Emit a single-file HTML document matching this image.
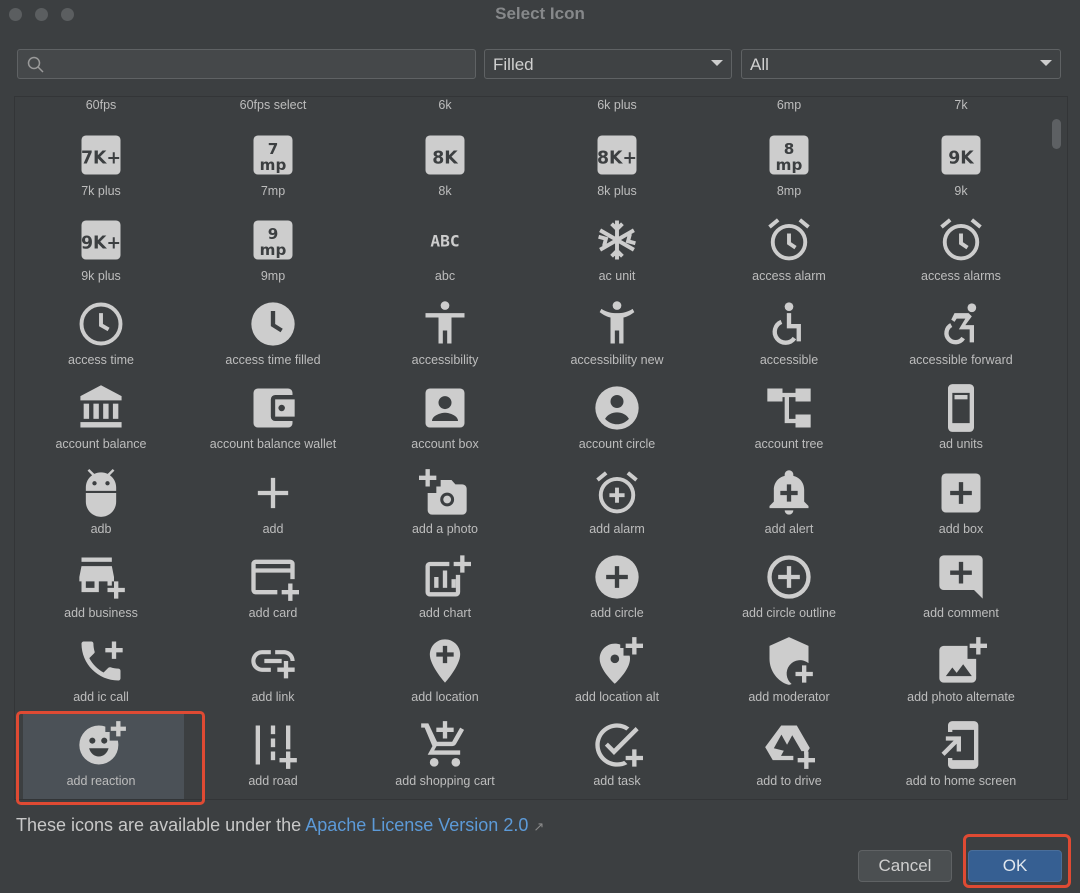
<!DOCTYPE html>
<html><head><meta charset="utf-8"><style>
body{margin:0;width:1080px;height:893px;background:#3c3f41;font-family:"Liberation Sans",sans-serif;position:relative;overflow:hidden}
.a{position:absolute}
.dot{position:absolute;top:8px;width:13px;height:13px;border-radius:50%;background:#5b5e60}
.grid{position:absolute;left:14px;top:96px;width:1054px;height:704px;border:1px solid #333537;box-sizing:border-box;background:#3c3f41;overflow:hidden}
.c{position:absolute;width:172px;height:84px;text-align:center}
.c svg{position:absolute;left:60px;top:0;width:52px;height:52px}
.c span{position:absolute;left:0;right:0;top:55px;font-size:12.5px;color:#bdbdbd;white-space:nowrap}
svg{fill:#cdcdcd}
.bt{font-size:18px;font-weight:bold;fill:#3c3f41;font-family:"DejaVu Sans",sans-serif}
</style></head><body>
<div class="dot" style="left:9px"></div><div class="dot" style="left:35px"></div><div class="dot" style="left:61px"></div>
<div class="a" style="left:0;right:0;top:4px;text-align:center;color:#86888a;font-size:17px;font-weight:bold">Select Icon</div>
<div class="a" style="left:17px;top:49px;width:459px;height:30px;box-sizing:border-box;border:1px solid #5f6264;border-radius:3px;background:#45484a"></div>
<svg class="a" style="left:27px;top:56px;width:18px;height:18px;fill:none;stroke:#9a9a9a;stroke-width:1.5"><circle cx="7" cy="7" r="5.5"/><line x1="11" y1="11" x2="16" y2="16"/></svg>
<div class="a" style="left:484px;top:49px;width:248px;height:30px;box-sizing:border-box;border:1px solid #5f6264;border-radius:3px;background:#3f4244;color:#d0d0d0;font-size:17px;line-height:30px;padding-left:8px">Filled</div>
<svg class="a" style="left:711px;top:60px;width:12px;height:8px"><path d="M0 0h12L6 6z"/></svg>
<div class="a" style="left:741px;top:49px;width:320px;height:30px;box-sizing:border-box;border:1px solid #5f6264;border-radius:3px;background:#3f4244;color:#d0d0d0;font-size:17px;line-height:30px;padding-left:8px">All</div>
<svg class="a" style="left:1040px;top:60px;width:12px;height:8px"><path d="M0 0h12L6 6z"/></svg>

<div class="grid">
<div class="a" style="left:8px;top:616px;width:161px;height:88px;background:#4b5157"></div>
<div class="a" style="left:1037px;top:22px;width:9px;height:30px;border-radius:5px;background:#5d6063"></div>
<div class="c" style="left:0;top:-54px"><span>60fps</span></div>
<div class="c" style="left:172px;top:-54px"><span>60fps select</span></div>
<div class="c" style="left:344px;top:-54px"><span>6k</span></div>
<div class="c" style="left:516px;top:-54px"><span>6k plus</span></div>
<div class="c" style="left:688px;top:-54px"><span>6mp</span></div>
<div class="c" style="left:860px;top:-54px"><span>7k</span></div>
<!-- row1 -->
<div class="c" style="left:0;top:32px"><svg viewBox="0 0 24 24"><rect x="3" y="3" width="18" height="18" rx="2"/><text x="12" y="16" text-anchor="middle" class="bt" style="font-size:8px">7K+</text></svg><span>7k plus</span></div>
<div class="c" style="left:172px;top:32px"><svg viewBox="0 0 24 24"><rect x="3" y="3" width="18" height="18" rx="2"/><text x="12" y="11.5" text-anchor="middle" class="bt" style="font-size:7px">7</text><text x="12" y="19" text-anchor="middle" class="bt" style="font-size:7px">mp</text></svg><span>7mp</span></div>
<div class="c" style="left:344px;top:32px"><svg viewBox="0 0 24 24"><rect x="3" y="3" width="18" height="18" rx="2"/><text x="12" y="16" text-anchor="middle" class="bt" style="font-size:8px">8K</text></svg><span>8k</span></div>
<div class="c" style="left:516px;top:32px"><svg viewBox="0 0 24 24"><rect x="3" y="3" width="18" height="18" rx="2"/><text x="12" y="16" text-anchor="middle" class="bt" style="font-size:8px">8K+</text></svg><span>8k plus</span></div>
<div class="c" style="left:688px;top:32px"><svg viewBox="0 0 24 24"><rect x="3" y="3" width="18" height="18" rx="2"/><text x="12" y="11.5" text-anchor="middle" class="bt" style="font-size:7px">8</text><text x="12" y="19" text-anchor="middle" class="bt" style="font-size:7px">mp</text></svg><span>8mp</span></div>
<div class="c" style="left:860px;top:32px"><svg viewBox="0 0 24 24"><rect x="3" y="3" width="18" height="18" rx="2"/><text x="12" y="16" text-anchor="middle" class="bt" style="font-size:8px">9K</text></svg><span>9k</span></div>
<!-- row2 -->
<div class="c" style="left:0;top:117px"><svg viewBox="0 0 24 24"><rect x="3" y="3" width="18" height="18" rx="2"/><text x="12" y="16" text-anchor="middle" class="bt" style="font-size:8px">9K+</text></svg><span>9k plus</span></div>
<div class="c" style="left:172px;top:117px"><svg viewBox="0 0 24 24"><rect x="3" y="3" width="18" height="18" rx="2"/><text x="12" y="11.5" text-anchor="middle" class="bt" style="font-size:7px">9</text><text x="12" y="19" text-anchor="middle" class="bt" style="font-size:7px">mp</text></svg><span>9mp</span></div>
<div class="c" style="left:344px;top:117px"><svg viewBox="0 0 24 24"><text x="12" y="15" text-anchor="middle" style="font-size:7.5px;font-weight:bold;font-family:'DejaVu Sans Mono',monospace">ABC</text></svg><span>abc</span></div>
<div class="c" style="left:516px;top:117px"><svg viewBox="0 0 24 24" style="fill:none;stroke:#cdcdcd;stroke-width:1.8"><path d="M12 3v18M4.2 7.5l15.6 9M4.2 16.5l15.6-9M9.5 4.5L12 7l2.5-2.5M9.5 19.5L12 17l2.5 2.5M3.5 10.5l3.4.9-.9 3.4M20.5 13.5l-3.4-.9.9-3.4"/></svg><span>ac unit</span></div>
<div class="c" style="left:688px;top:117px"><svg viewBox="0 0 24 24" style="fill:none;stroke:#cdcdcd;stroke-width:1.8"><circle cx="12" cy="13" r="7.5"/><path d="M12 9v4.5l3 2M3 6l4-3.3M21 6l-4-3.3"/></svg><span>access alarm</span></div>
<div class="c" style="left:860px;top:117px"><svg viewBox="0 0 24 24" style="fill:none;stroke:#cdcdcd;stroke-width:1.8"><circle cx="12" cy="13" r="7.5"/><path d="M12 9v4.5l3 2M3 6l4-3.3M21 6l-4-3.3"/></svg><span>access alarms</span></div>
<!-- row3 -->
<div class="c" style="left:0;top:201px"><svg viewBox="0 0 24 24" style="fill:none;stroke:#cdcdcd;stroke-width:1.8"><circle cx="12" cy="12" r="9"/><path d="M12 7v5.5l3.5 2"/></svg><span>access time</span></div>
<div class="c" style="left:172px;top:201px"><svg viewBox="0 0 24 24"><circle cx="12" cy="12" r="10"/><path d="M11 6h2v6l3.5 2.2-1 1.6L11 13z" fill="#3c3f41"/></svg><span>access time filled</span></div>
<div class="c" style="left:344px;top:201px"><svg viewBox="0 0 24 24"><circle cx="12" cy="3.5" r="2"/><path d="M3 7h18v2h-6v12h-2v-6h-2v6H9V9H3z"/></svg><span>accessibility</span></div>
<div class="c" style="left:516px;top:201px"><svg viewBox="0 0 24 24"><circle cx="12" cy="3.5" r="2"/><path d="M4 6.5l.8-1.5C7 6.5 9.5 7 12 7s5-.5 7.2-2l.8 1.5C18 8 16.5 8.7 15 9v12h-2v-6h-2v6H9V9C7.5 8.7 6 8 4 6.5z"/></svg><span>accessibility new</span></div>
<div class="c" style="left:688px;top:201px"><svg viewBox="0 0 24 24"><circle cx="12" cy="4" r="2"/><path d="M11 7h2v5h4.5v8h-2v-6H11z"/><path d="M8.5 11a5 5 0 1 0 6 7.5" fill="none" stroke="#cdcdcd" stroke-width="2"/></svg><span>accessible</span></div>
<div class="c" style="left:860px;top:201px"><svg viewBox="0 0 24 24"><circle cx="17" cy="4.5" r="2"/><path d="M9 7h6.5l1.5 1.5-3 4h4v8h-2v-6h-5l3-5h-4l-1 1.5-1.5-1z"/><path d="M7.5 12.5a4.2 4.2 0 1 0 5.5 6" fill="none" stroke="#cdcdcd" stroke-width="2"/></svg><span>accessible forward</span></div>
<!-- row4 -->
<div class="c" style="left:0;top:285px"><svg viewBox="0 0 24 24"><path d="M12 1.5L2.5 6.5V8.5h19V6.5z"/><rect x="4" y="10" width="2.5" height="7"/><rect x="8.5" y="10" width="2.5" height="7"/><rect x="13" y="10" width="2.5" height="7"/><rect x="17.5" y="10" width="2.5" height="7"/><rect x="2.5" y="18.5" width="19" height="2.5"/></svg><span>account balance</span></div>
<div class="c" style="left:172px;top:285px"><svg viewBox="0 0 24 24"><path d="M5 3h14a2 2 0 0 1 2 2v1h-8a2 2 0 0 0-2 2v8a2 2 0 0 0 2 2h8v1a2 2 0 0 1-2 2H5a2 2 0 0 1-2-2V5a2 2 0 0 1 2-2z"/><path d="M13 8h9v8h-9z"/><circle cx="16" cy="12" r="1.5" fill="#3c3f41"/></svg><span>account balance wallet</span></div>
<div class="c" style="left:344px;top:285px"><svg viewBox="0 0 24 24"><rect x="3" y="3" width="18" height="18" rx="2"/><circle cx="12" cy="9.5" r="3" fill="#3c3f41"/><path d="M6 18c0-2.5 4-3.8 6-3.8s6 1.3 6 3.8z" fill="#3c3f41"/></svg><span>account box</span></div>
<div class="c" style="left:516px;top:285px"><svg viewBox="0 0 24 24"><circle cx="12" cy="12" r="10"/><circle cx="12" cy="9" r="3" fill="#3c3f41"/><path d="M6.5 17c1-2 3.5-3 5.5-3s4.5 1 5.5 3c-1.5 1.6-3.4 2.5-5.5 2.5S8 18.6 6.5 17z" fill="#3c3f41"/></svg><span>account circle</span></div>
<div class="c" style="left:688px;top:285px"><svg viewBox="0 0 24 24"><rect x="2" y="3" width="7" height="6"/><rect x="15" y="3" width="7" height="6"/><rect x="15" y="15" width="7" height="6"/><path d="M9 5h6v2h-3v10h3v2h-5V7H9z"/></svg><span>account tree</span></div>
<div class="c" style="left:860px;top:285px"><svg viewBox="0 0 24 24"><path d="M8 1h8a2 2 0 0 1 2 2v18a2 2 0 0 1-2 2H8a2 2 0 0 1-2-2V3a2 2 0 0 1 2-2zm0 4v14h8V5z"/><rect x="9" y="6" width="6" height="2"/></svg><span>ad units</span></div>
<!-- row5 -->
<div class="c" style="left:0;top:370px"><svg viewBox="0 0 24 24"><path d="M5 16c0 3.9 3.1 7 7 7s7-3.1 7-7v-4H5zM16.1 3.8l2.1-2.1-.8-.8-2.3 2.3C14.1 2.7 13.1 2.5 12 2.5s-2.1.2-3.1.7L6.6.9l-.8.8 2.1 2.1C6.1 5.1 5 7.1 5 9.5V11h14V9.5c0-2.4-1.1-4.4-2.9-5.7z"/><circle cx="9" cy="7.5" r="1" fill="#3c3f41"/><circle cx="15" cy="7.5" r="1" fill="#3c3f41"/></svg><span>adb</span></div>
<div class="c" style="left:172px;top:370px"><svg viewBox="0 0 24 24"><path d="M11 5h2v6h6v2h-6v6h-2v-6H5v-2h6z"/></svg><span>add</span></div>
<div class="c" style="left:344px;top:370px"><svg viewBox="0 0 24 24"><path d="M3 1h2v3h3v2H5v3H3V6H0V4h3z"/><path d="M10 6h5l1.8 2H20a2 2 0 0 1 2 2v10a2 2 0 0 1-2 2H6a2 2 0 0 1-2-2v-8h4V9h2z"/><circle cx="13" cy="15" r="3.2" fill="#3c3f41"/><circle cx="13" cy="15" r="1.8"/></svg><span>add a photo</span></div>
<div class="c" style="left:516px;top:370px"><svg viewBox="0 0 24 24" style="fill:none;stroke:#cdcdcd;stroke-width:1.8"><circle cx="12" cy="13" r="7.5"/><path d="M12 9.5v7M8.5 13h7M3 6l4-3.3M21 6l-4-3.3"/></svg><span>add alarm</span></div>
<div class="c" style="left:688px;top:370px"><svg viewBox="0 0 24 24"><path d="M12 22a2 2 0 0 0 2-2h-4a2 2 0 0 0 2 2zm7-6v-5.5c0-3.2-2-5.7-5-6.4V3.5a2 2 0 0 0-4 0v.6c-3 .7-5 3.2-5 6.4V16l-2 2v1h18v-1z"/><path d="M11 8h2v3h3v2h-3v3h-2v-3H8v-2h3z" fill="#3c3f41"/></svg><span>add alert</span></div>
<div class="c" style="left:860px;top:370px"><svg viewBox="0 0 24 24"><rect x="3" y="3" width="18" height="18" rx="2"/><path d="M11 7h2v4h4v2h-4v4h-2v-4H7v-2h4z" fill="#3c3f41"/></svg><span>add box</span></div>
<!-- row6 -->
<div class="c" style="left:0;top:454px"><svg viewBox="0 0 24 24"><rect x="3" y="3" width="14" height="2"/><path d="M2 12l1-5h14l1 5v2h-1v2h-2v-2h-4v5H3v-5H2zm3 2v3h4v-3z"/><path d="M18 14h2v3h3v2h-3v3h-2v-3h-3v-2h3z"/></svg><span>add business</span></div>
<div class="c" style="left:172px;top:454px"><svg viewBox="0 0 24 24"><path d="M4 4h16a2 2 0 0 1 2 2v7h-2v-3H4v8h10v2H4a2 2 0 0 1-2-2V6a2 2 0 0 1 2-2zm0 2v2h16V6z"/><path d="M19 15h2v3h3v2h-3v3h-2v-3h-3v-2h3z"/></svg><span>add card</span></div>
<div class="c" style="left:344px;top:454px"><svg viewBox="0 0 24 24"><path d="M5 5h9v2H5v12h12v-8h2v8a2 2 0 0 1-2 2H5a2 2 0 0 1-2-2V7a2 2 0 0 1 2-2z"/><rect x="7" y="12" width="2" height="5"/><rect x="11" y="9" width="2" height="8"/><rect x="15" y="13" width="2" height="4"/><path d="M19 2h2v3h3v2h-3v3h-2V7h-3V5h3z"/></svg><span>add chart</span></div>
<div class="c" style="left:516px;top:454px"><svg viewBox="0 0 24 24"><circle cx="12" cy="12" r="10"/><path d="M11 7h2v4h4v2h-4v4h-2v-4H7v-2h4z" fill="#3c3f41"/></svg><span>add circle</span></div>
<div class="c" style="left:688px;top:454px"><svg viewBox="0 0 24 24"><circle cx="12" cy="12" r="9" fill="none" stroke="#cdcdcd" stroke-width="2"/><path d="M11 7h2v4h4v2h-4v4h-2v-4H7v-2h4z"/></svg><span>add circle outline</span></div>
<div class="c" style="left:860px;top:454px"><svg viewBox="0 0 24 24"><path d="M4 2h16a2 2 0 0 1 2 2v18l-4-4H4a2 2 0 0 1-2-2V4a2 2 0 0 1 2-2z"/><path d="M11 5h2v4h4v2h-4v4h-2v-4H7V9h4z" fill="#3c3f41"/></svg><span>add comment</span></div>
<!-- row7 -->
<div class="c" style="left:0;top:538px"><svg viewBox="0 0 24 24"><path d="M20 15.5c-1.2 0-2.4-.2-3.6-.6-.3-.1-.7 0-1 .2l-2.2 2.2c-2.8-1.4-5.1-3.8-6.6-6.6l2.2-2.2c.3-.3.4-.7.2-1-.3-1.1-.5-2.3-.5-3.5 0-.6-.4-1-1-1H4c-.5 0-1 .4-1 1 0 9.4 7.6 17 17 17 .6 0 1-.5 1-1v-3.5c0-.6-.5-1-1-1z"/><path d="M17 3h2v3h3v2h-3v3h-2V8h-3V6h3z"/></svg><span>add ic call</span></div>
<div class="c" style="left:172px;top:538px"><svg viewBox="0 0 24 24"><path d="M8 11h8v2H8zM20.1 12H22c0-2.8-2.2-5-5-5h-4v1.9h4c1.7 0 3.1 1.4 3.1 3.1zM3.9 12c0-1.7 1.4-3.1 3.1-3.1h4V7H7c-2.8 0-5 2.2-5 5s2.2 5 5 5h4v-1.9H7c-1.7 0-3.1-1.4-3.1-3.1zM19 12h-2v3h-3v2h3v3h2v-3h3v-2h-3z"/></svg><span>add link</span></div>
<div class="c" style="left:344px;top:538px"><svg viewBox="0 0 24 24"><path d="M12 2C8.1 2 5 5.1 5 9c0 5.2 7 13 7 13s7-7.8 7-13c0-3.9-3.1-7-7-7z"/><path d="M11 5h2v3h3v2h-3v3h-2v-3H8V8h3z" fill="#3c3f41"/></svg><span>add location</span></div>
<div class="c" style="left:516px;top:538px"><svg viewBox="0 0 24 24"><path d="M11 4c-3.9 0-7 3.1-7 7 0 5.2 7 11.5 7 11.5s7-6.3 7-11.5c0-.5 0-1-.2-1.5H15V6h-1.5V4.4C12.7 4.1 11.9 4 11 4z"/><circle cx="11" cy="11" r="2" fill="#3c3f41"/><path d="M19 1h2v3h3v2h-3v3h-2V6h-3V4h3z"/></svg><span>add location alt</span></div>
<div class="c" style="left:688px;top:538px"><svg viewBox="0 0 24 24"><path d="M12 1L3 5v6c0 5.5 3.8 10.7 9 12 .4-.1.8-.2 1.2-.4A6 6 0 0 1 21 13V5z"/><path d="M18 14h2v3h3v2h-3v3h-2v-3h-3v-2h3z"/></svg><span>add moderator</span></div>
<div class="c" style="left:860px;top:538px"><svg viewBox="0 0 24 24"><path d="M4 5h11v6h4v9a2 2 0 0 1-2 2H4a2 2 0 0 1-2-2V7a2 2 0 0 1 2-2z"/><path d="M5 19l3-4 2 2.5 3-4 4 5.5z" fill="#3c3f41"/><path d="M19 1h2v3h3v2h-3v3h-2V6h-3V4h3z"/></svg><span>add photo alternate</span></div>
<!-- row8 -->
<div class="c" style="left:0;top:622px"><svg viewBox="0 0 24 24"><path d="M11 3a9 9 0 1 0 9 9c0-.7-.1-1.4-.2-2H16V6h-2V3.5C13 3.2 12 3 11 3z"/><circle cx="8" cy="10" r="1.4" fill="#3c3f41"/><circle cx="13.5" cy="10" r="1.4" fill="#3c3f41"/><path d="M6.5 13.5h9c-.6 2.3-2.4 3.8-4.5 3.8s-3.9-1.5-4.5-3.8z" fill="#3c3f41"/><path d="M19 1h2v2.5h2.5v2H21V8h-2V5.5h-2.5v-2H19z"/></svg><span>add reaction</span></div>
<div class="c" style="left:172px;top:622px"><svg viewBox="0 0 24 24"><rect x="4" y="3" width="2" height="18"/><rect x="11" y="3" width="2" height="4"/><rect x="11" y="9" width="2" height="4"/><rect x="11" y="15" width="2" height="4"/><rect x="18" y="3" width="2" height="11"/><path d="M18 15h2v3h3v2h-3v3h-2v-3h-3v-2h3z"/></svg><span>add road</span></div>
<div class="c" style="left:344px;top:622px"><svg viewBox="0 0 24 24"><path d="M11 1h2v3h3v2h-3v3h-2V6H8V4h3z"/><circle cx="7" cy="20" r="2"/><circle cx="17" cy="20" r="2"/><path d="M1 2h3.3l4 8.5h7L19 4l1.8 1-3.7 6.5c-.3.6-1 1-1.7 1H8.1L7 14.5h12v2H4l2.2-4L2.6 4H1z"/></svg><span>add shopping cart</span></div>
<div class="c" style="left:516px;top:622px"><svg viewBox="0 0 24 24"><path d="M22 5.2l-11.4 11.4-4.2-4.3 1.4-1.4 2.8 2.8 10-10zM12 20c-4.4 0-8-3.6-8-8s3.6-8 8-8c1.6 0 3 .5 4.3 1.3l1.4-1.4C16.1 2.7 14.1 2 12 2 6.5 2 2 6.5 2 12s4.5 10 10 10c1.7 0 3.4-.4 4.8-1.2l-1.5-1.5c-1 .5-2.1.7-3.3.7z"/><path d="M19 14h2v3h3v2h-3v3h-2v-3h-3v-2h3z"/></svg><span>add task</span></div>
<div class="c" style="left:688px;top:622px"><svg viewBox="0 0 24 24"><path d="M8.4 3h7.2l6 10.4-1.8 3H19v-1.5c-.1 0-1-.1-1.2 0l-4.3-7.4L8.3 17H14v2H4.5L1 13z"/><path d="M5 13.5l3.5-6.3L12 13.5l-1 1.5z" fill="#3c3f41"/><path d="M19 15h2v3h3v2h-3v3h-2v-3h-3v-2h3z"/></svg><span>add to drive</span></div>
<div class="c" style="left:860px;top:622px"><svg viewBox="0 0 24 24"><path d="M18 1H8c-1.1 0-2 .9-2 2v3h2V5h10v14H8v-1H6v3c0 1.1.9 2 2 2h10c1.1 0 2-.9 2-2V3c0-1.1-.9-2-2-2z"/><path d="M10 15h2V8H5v2h3.6L3 15.6 4.4 17 10 11.4z"/></svg><span>add to home screen</span></div>
</div>

<div class="a" style="left:16px;top:711px;width:189px;height:94px;box-sizing:border-box;border:3px solid #df4a33;border-radius:5px"></div>

<div class="a" style="left:16px;top:815px;font-size:18px;color:#c8c8c8">These icons are available under the <span style="color:#5c9ad8">Apache License Version 2.0</span> <span style="color:#8a8a8a;font-size:13px">↗</span></div>

<div class="a" style="left:858px;top:850px;width:94px;height:32px;box-sizing:border-box;border:1px solid #5f6264;border-radius:4px;background:#4b4f51;color:#cfcfcf;font-size:17px;line-height:30px;text-align:center">Cancel</div>
<div class="a" style="left:968px;top:850px;width:94px;height:32px;box-sizing:border-box;border:1px solid #4a6e9a;border-radius:4px;background:#365f92;color:#dfe6ee;font-size:17px;line-height:30px;text-align:center">OK</div>
<div class="a" style="left:963px;top:834px;width:108px;height:54px;box-sizing:border-box;border:3px solid #df4a33;border-radius:6px"></div>
</body></html>
